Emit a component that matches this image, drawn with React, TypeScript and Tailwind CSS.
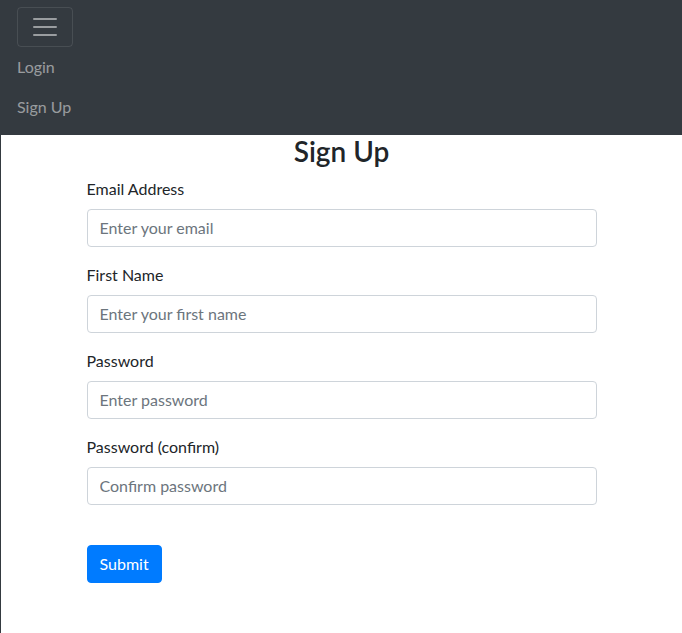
const fields = [
  { id: 'email', label: 'Email Address', type: 'email', placeholder: 'Enter your email' },
  { id: 'firstName', label: 'First Name', type: 'text', placeholder: 'Enter your first name' },
  { id: 'password', label: 'Password', type: 'password', placeholder: 'Enter password' },
  { id: 'password2', label: 'Password (confirm)', type: 'password', placeholder: 'Confirm password' },
];

export default function App() {
  return (
    <div
      className="min-h-[633px] bg-white border-l border-[#343a40] text-[#212529]"
      style={{ fontFamily: '"Segoe UI", Lato, "Noto Sans", sans-serif' }}
    >
      {/* Navbar (collapsed, expanded menu) */}
      <nav className="bg-[#343a40] px-4 pt-[7px] pb-2 flex flex-col items-start">
        <button
          type="button"
          className="h-10 w-14 px-3 py-1 border border-white/10 rounded flex items-center justify-center"
        >
          <svg width="30" height="30" viewBox="0 0 30 30">
            <path
              d="M4 7h22M4 15h22M4 23h22"
              stroke="rgba(255,255,255,0.5)"
              strokeWidth="2"
              strokeLinecap="round"
              strokeMiterlimit="10"
            />
          </svg>
        </button>
        <a className="py-2 text-base leading-6 text-white/50">Login</a>
        <a className="py-2 text-base leading-6 text-white/50">Sign Up</a>
      </nav>

      {/* Sign up form */}
      <div className="w-[510px] mx-auto">
        <h3 className="text-center text-[28px] leading-[1.2] font-semibold mb-2">Sign Up</h3>
        <form onSubmit={e => e.preventDefault()}>
          {fields.map(f => (
            <div key={f.id} className="mb-4">
              <label htmlFor={f.id} className="block text-base leading-6 mb-2">
                {f.label}
              </label>
              <input
                id={f.id}
                type={f.type}
                placeholder={f.placeholder}
                className="block w-full h-[38px] px-3 py-1.5 text-base leading-6 border border-[#ced4da] rounded placeholder:text-[#6c757d] outline-none"
              />
            </div>
          ))}
          <button
            type="submit"
            className="mt-6 h-[38px] px-3 py-1.5 text-base leading-6 text-white bg-[#007bff] border border-[#007bff] rounded"
          >
            Submit
          </button>
        </form>
      </div>
    </div>
  );
}
